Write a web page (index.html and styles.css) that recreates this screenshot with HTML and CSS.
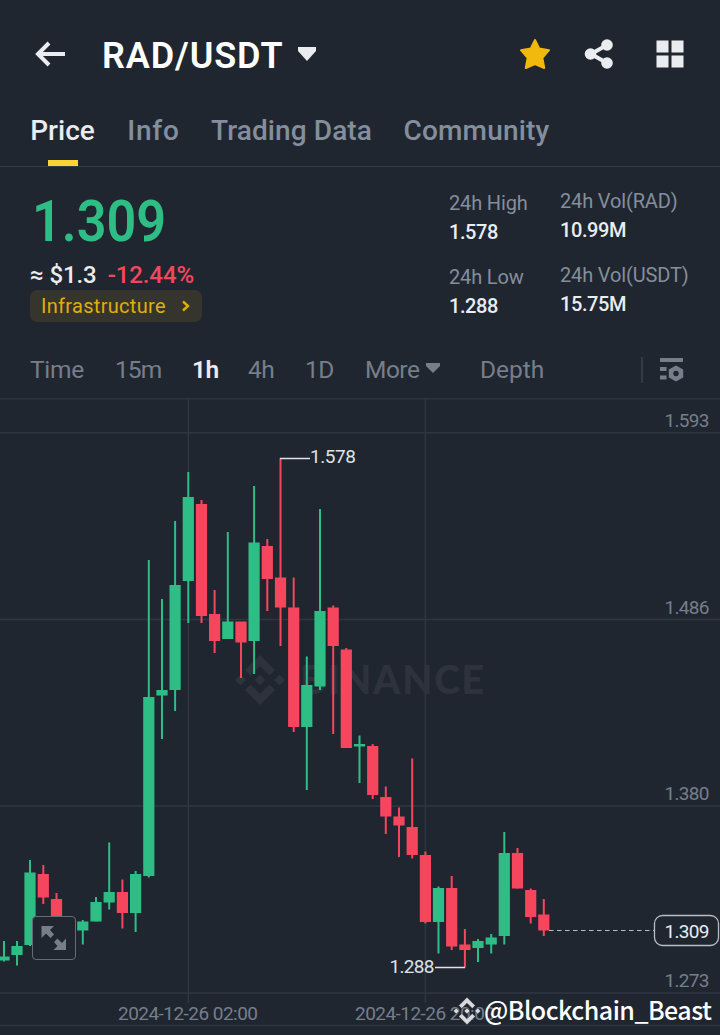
FILE: index.html
```
<!DOCTYPE html>
<html lang="en">
<head>
  <meta charset="UTF-8" />
  <title>RAD/USDT</title>
  <link rel="stylesheet" href="styles.css">
</head>
<body>

<header class="topbar">
  <svg class="back" width="32" height="26" viewBox="0 0 32 26"><path d="M15 2 L4 13 L15 24 M4 13 H31" /></svg>
  <h1 class="pair">RAD/USDT</h1>
  <svg class="caret" width="20" height="16" viewBox="0 0 20 16"><path d="M1 1 H19 V5 L10 15 L1 5 Z" /></svg>
  <div class="actions">
    <svg class="star" width="32" height="32" viewBox="0 0 32 32"><path d="M16 2 L20.3 10.6 L30 12.2 L23.4 19.8 L25.2 30 L16 26 L6.8 30 L8.6 19.8 L2 12.2 L11.7 10.6 Z" /></svg>
    <svg class="share" width="32" height="32" viewBox="0 0 32 32">
      <path d="M24 7 L8 16 L24 25" />
      <circle cx="24" cy="7" r="5.8" /><circle cx="7.5" cy="16" r="5.8" /><circle cx="24" cy="25" r="5.8" />
    </svg>
    <svg class="grid-icon" width="28" height="28" viewBox="0 0 28 28"><path d="M.5 .5h12v12h-12z M15.5 .5h12v12h-12z M.5 15.5h12v12h-12z M15.5 15.5h12v12h-12z" /></svg>
  </div>
</header>

<nav class="tabs">
  <span class="tab tab-price active">Price</span>
  <span class="tab tab-info">Info</span>
  <span class="tab tab-trading">Trading Data</span>
  <span class="tab tab-community">Community</span>
</nav>

<section class="ticker">
  <div class="quote">
    <div class="last-price">1.309</div>
    <div class="fiat"><span class="usd">≈ $1.3</span><span class="change">-12.44%</span></div>
    <div class="tag">
      <span>Infrastructure</span>
      <svg width="10" height="12" viewBox="0 0 10 12"><path d="M2 1.5 L7 6 L2 10.5" /></svg>
    </div>
  </div>
  <div class="stats stats-range">
    <div class="stat"><div class="label">24h High</div><div class="value">1.578</div></div>
    <div class="stat"><div class="label">24h Low</div><div class="value">1.288</div></div>
  </div>
  <div class="stats stats-volume">
    <div class="stat"><div class="label">24h Vol(RAD)</div><div class="value">10.99M</div></div>
    <div class="stat"><div class="label">24h Vol(USDT)</div><div class="value">15.75M</div></div>
  </div>
</section>

<div class="intervals">
  <span class="i-time">Time</span>
  <span class="i-15m">15m</span>
  <span class="i-1h active">1h</span>
  <span class="i-4h">4h</span>
  <span class="i-1d">1D</span>
  <span class="i-more">More <svg width="14" height="10" viewBox="0 0 14 10"><path d="M0 0 H14 V3 L7 10 L0 3 Z" /></svg></span>
  <span class="i-depth">Depth</span>
  <div class="settings">
    <svg width="26" height="26" viewBox="0 0 26 26">
      <path d="M1 1h23v4h-23z M1 10h6.5v4h-6.5z M1 18.5h6.5v4h-6.5z" />
      <path fill-rule="evenodd" d="M17 8.5 L24.2 12.4 V20.6 L17 24.5 L9.8 20.6 V12.4 Z M17 13.7 a2.8 2.8 0 1 0 .01 0 Z" />
    </svg>
  </div>
</div>

<div class="chart">
  <svg width="720" height="637" viewBox="0 398 720 637">
    <defs>
      <g id="logo">
        <path d="M-15 -10 L0 -25 L15 -10 L9.5 -4.5 L0 -14 L-9.5 -4.5 Z M-15 10 L0 25 L15 10 L9.5 4.5 L0 14 L-9.5 4.5 Z" />
        <path d="M0 -5.5 L5.5 0 L0 5.5 L-5.5 0 Z M-19.5 -5.5 L-14 0 L-19.5 5.5 L-25 0 Z M19.5 -5.5 L25 0 L19.5 5.5 L14 0 Z" />
      </g>
    </defs>
    <path class="gridline" d="M0 398.7 H720 M0 432.7 H720 M0 619.5 H720 M0 806 H720 M0 993 H720 M0 1025.5 H720 M188.3 399 V1003 M425.4 399 V1003" />
    <g class="watermark">
      <use href="#logo" x="260" y="680" />
      <text x="300" y="694" textLength="184">BINANCE</text>
    </g>
    <g id="candles"></g>
    <g class="axis">
      <text x="664.5" y="427" textLength="45">1.593</text>
      <text x="664.5" y="614" textLength="45">1.486</text>
      <text x="664.5" y="800" textLength="45">1.380</text>
      <text x="664.5" y="987" textLength="45">1.273</text>
      <text x="118" y="1020" textLength="140">2024-12-26 02:00</text>
      <text x="355" y="1020" textLength="140">2024-12-26 20:00</text>
    </g>
    <g class="marks">
      <path d="M280 458.5 H310 M435 967.5 H465" />
      <text x="310" y="463" textLength="46">1.578</text>
      <text x="389.5" y="973" textLength="45">1.288</text>
    </g>
    <path class="price-line" d="M549 930.5 H654" />
    <g class="price-tag">
      <rect x="654.5" y="915.5" width="64" height="30" rx="8" />
      <text x="664.5" y="938" textLength="45">1.309</text>
    </g>
    <g class="expand">
      <rect x="32.5" y="916.5" width="43" height="43" rx="3.5" />
      <path d="M41.5 926 H54 L50 930 L54 934.5 L50.5 938 L46 933.5 L41.5 938 Z M66 950 H53.5 L57.5 946 L54 942 L57.5 938.5 L62 943 L66 938.5 Z" />
    </g>
    <g class="handle">
      <use href="#logo" transform="translate(467 1011) scale(.55)" />
      <text x="484" y="1020" textLength="228">@Blockchain_Beast</text>
    </g>
  </svg>
</div>

<script>
// x, high, low, body top, body bottom, up
const candles = [
  [4, 941, 961.5, 956.5, 960.5, 1], [17, 941, 965.5, 946, 955, 1],
  [30, 860, 946, 872.5, 945, 1], [43.3, 865, 904, 874, 897.5, 0],
  [56.5, 893, 920, 899, 918, 0], [82.8, 920, 944.5, 921.5, 930.5, 1],
  [96, 897, 921.5, 902, 921.5, 1], [109.2, 842.5, 909.5, 892, 902.5, 1],
  [122.4, 879.5, 928.5, 892, 913, 0], [135.6, 871, 932, 874, 913, 1],
  [148.8, 560, 877.5, 697, 876, 1], [162, 599, 739, 690, 695.5, 1],
  [175.1, 521, 711, 585, 690, 1], [188.3, 472, 623, 497, 581, 1],
  [201.5, 500, 623, 504, 616, 0], [214.6, 590, 653, 614, 641, 0],
  [227.8, 532, 639, 621.5, 639, 1], [241, 622, 678, 621.5, 642.5, 0],
  [254.1, 486, 674, 542.5, 641, 1], [267.3, 539, 611, 546, 579, 0],
  [280.5, 458, 646, 577.5, 607.5, 0], [293.7, 577.5, 732, 607.5, 727, 0],
  [306.8, 656.5, 790, 685, 727, 1], [320, 509, 690, 611, 686.5, 1],
  [333.2, 605.5, 734, 607.5, 646, 0], [346.3, 648, 748, 649.5, 748, 0],
  [359.5, 735.5, 783, 744, 746.5, 1], [372.7, 744, 799, 746, 795, 0],
  [385.8, 786.5, 834, 797, 816.5, 0], [399, 807.5, 857, 816.5, 825.5, 0],
  [412.2, 758.5, 858.5, 827, 855, 0], [425.4, 851.5, 923.5, 855, 922, 0],
  [438.5, 886.5, 953.5, 888, 922, 1], [451.7, 876, 950, 888, 946.5, 0],
  [464.9, 929, 967.5, 944.5, 950, 0], [478, 939, 962, 941, 948, 1],
  [491.2, 934, 953.5, 937.5, 944.5, 1], [504.3, 832, 944.5, 853, 936, 1],
  [517.5, 848, 888.5, 853, 888.5, 0], [530.7, 888.5, 923.5, 890, 917, 0],
  [543.8, 899, 936, 914.5, 930.5, 0]
];
document.getElementById("candles").innerHTML = candles.map(([x, high, low, top, bottom, up]) =>
  `<g class="${up ? "up" : "down"}">
    <rect x="${x - 1}" y="${high}" width="2" height="${low - high}" />
    <rect x="${x - 5.6}" y="${top}" width="11.2" height="${bottom - top}" />
  </g>`).join("");
</script>

</body>
</html>
```
FILE: styles.css
```
* { box-sizing: border-box; }
body {
  margin: 0;
  width: 720px;
  height: 1035px;
  overflow: hidden;
  background: #202630;
  color: #eaecef;
  font-family: Roboto, "Noto Sans", sans-serif;
}
svg { display: block; flex: none; }
span, .label, .value, .last-price, .pair { white-space: nowrap; }

.topbar {
  display: flex;
  align-items: center;
  height: 108px;
  padding: 0 36px 0 34px;
}
.back { fill: none; stroke: #eaecef; stroke-width: 4; }
.pair {
  margin: 4px 0 0 36px;
  width: 180px;
  font-size: 36px;
  font-weight: 600;
  letter-spacing: 0.9px;
  color: #fff;
}
.caret { margin-left: 15px; fill: #eaecef; }
.actions { display: flex; align-items: center; margin-left: auto; }
.star { fill: #f0b90b; stroke: #f0b90b; stroke-width: 2; stroke-linejoin: round; }
.share { margin-left: 32px; fill: #eaecef; }
.share path { fill: none; stroke: #eaecef; stroke-width: 4; }
.grid-icon { margin-left: 41px; fill: #eaecef; }

.tabs {
  display: flex;
  height: 59px;
  padding: 0 30px;
  border-bottom: 1px solid #333b47;
  font-size: 28px;
  font-weight: 500;
  line-height: 45px;
  color: #848e9c;
}
.tab { display: flex; flex-direction: column; align-items: center; }
.tab-price { width: 65px; margin-right: 31px; }
.tab-info { width: 55px; margin-right: 30px; letter-spacing: 0.8px; }
.tab-trading { width: 161px; margin-right: 31px; letter-spacing: 0.1px; }
.tab-community { width: 147px; letter-spacing: 0.2px; }
.tabs .active { color: #eaecef; }
.tabs .active::after {
  content: "";
  width: 30px;
  height: 6px;
  margin-top: 7px;
  background: #fcd535;
}

.ticker { display: flex; height: 174px; padding-left: 30px; }
.quote { width: 419px; }
.last-price {
  margin: 22px 0 0 2px;
  font-size: 58px;
  font-weight: 600;
  line-height: 64px;
  color: #2ebd85;
  transform: scaleX(0.9);
  transform-origin: left;
}
.fiat {
  display: flex;
  gap: 11px;
  margin-top: 7px;
  font-size: 24px;
  font-weight: 500;
  line-height: 30px;
  letter-spacing: -0.1px;
}
.change { color: #f6465d; }
.tag {
  display: flex;
  align-items: center;
  justify-content: space-between;
  width: 172px;
  height: 32px;
  padding: 0 11px;
  border-radius: 7px;
  background: #35342d;
  color: #e0ae0d;
  font-size: 20px;
  letter-spacing: 0.3px;
}
.tag path { fill: none; stroke: #e0ae0d; stroke-width: 2.4; }
.stats-range { width: 111px; padding-top: 22px; }
.stats-volume { padding-top: 20px; }
.stat { height: 74px; }
.label { font-size: 20px; line-height: 29px; letter-spacing: -0.15px; color: #848e9c; }
.value { font-size: 20px; font-weight: 500; line-height: 29px; letter-spacing: -0.4px; }

.intervals {
  display: flex;
  align-items: center;
  height: 57px;
  padding: 0 35px 0 30px;
  font-size: 24.5px;
  color: #767e8b;
}
.intervals .active { color: #eaecef; font-weight: 600; }
.i-time { width: 85px; letter-spacing: -0.3px; }
.i-15m { width: 77px; letter-spacing: -0.9px; }
.i-1h { width: 56px; letter-spacing: -0.5px; }
.i-4h { width: 57px; letter-spacing: -0.5px; }
.i-1d { width: 60px; letter-spacing: -0.5px; }
.i-more { display: flex; align-items: center; gap: 7px; width: 115px; letter-spacing: -0.5px; }
.i-more svg { margin-bottom: 3px; }
.intervals svg { fill: #767e8b; }
.settings {
  margin-left: auto;
  padding-left: 16px;
  border-left: 2px solid #333b47;
}

.gridline { fill: none; stroke: #2f3641; stroke-width: 1.5; }
.watermark { fill: #2d323d; font: 900 39px Lato, sans-serif; }
.up { fill: #2ebd85; }
.down { fill: #f6465d; }
.axis { fill: #767e8b; font-size: 19px; }
.marks { fill: #dfe2e6; font-size: 19px; }
.marks path { stroke: #dfe2e6; stroke-width: 1.3; }
.price-line { stroke: #b7bdc6; stroke-width: 1.2; stroke-dasharray: 4.5 3.5; }
.price-tag { fill: #eaecef; font-size: 19px; }
.price-tag rect { fill: #202630; stroke: #b7bdc6; stroke-width: 1.3; }
.expand { fill: #767e8b; }
.expand rect { fill: #202630; stroke: #656c78; }
.handle { fill: #fff; font: 500 25px "Noto Sans CJK SC", sans-serif; }
.handle use { fill: #d8dadc; stroke: #202630; stroke-width: 1; }
```
